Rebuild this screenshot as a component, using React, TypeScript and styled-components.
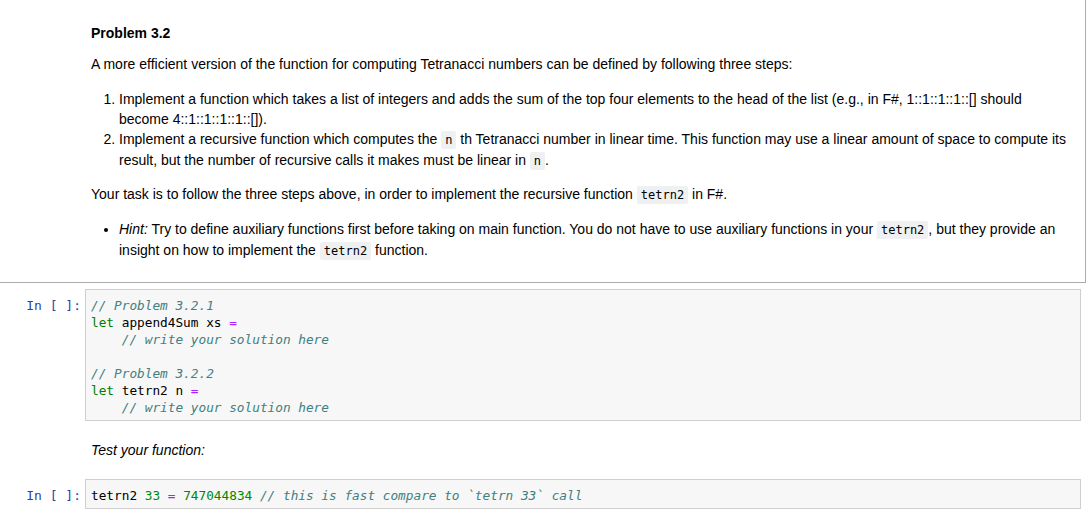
import React from "react";
import styled, { createGlobalStyle } from "styled-components";

const GlobalStyle = createGlobalStyle`
  body {
    margin: 0;
    background: #fff;
    color: #000;
    font-family: "Liberation Sans", Arial, sans-serif;
    font-size: 14px;
    line-height: 20px;
  }
`;

const Notebook = styled.div`
  display: flex;
  flex-direction: column;
  width: 1092px;
`;

const TextCell = styled.div<{ $framed?: boolean }>`
  display: flex;
  flex-direction: column;
  margin-right: 6px;
  padding: ${(p) => (p.$framed ? "23px 16px 21px 91px" : "19px 16px 19px 91px")};
  border-right: ${(p) => (p.$framed ? "1px solid #ababab" : "none")};
  border-bottom: ${(p) => (p.$framed ? "1px solid #ababab" : "none")};
`;

const Title = styled.div`
  font-weight: bold;
`;

const Para = styled.p<{ $italic?: boolean; $top?: number }>`
  margin: ${(p) => p.$top ?? 0}px 0 0;
  font-style: ${(p) => (p.$italic ? "italic" : "normal")};
`;

const List = styled.ol<{ $bullet?: boolean; $top?: number }>`
  margin: ${(p) => p.$top ?? 0}px 0 0;
  padding-left: 28px;
  list-style-type: ${(p) => (p.$bullet ? "disc" : "decimal")};
`;

const Code = styled.code`
  font-family: "DejaVu Sans Mono", "Liberation Mono", monospace;
  font-size: 12px;
  background: #eff0f1;
  padding: 2px 4px;
  border-radius: 2px;
`;

const CodeCell = styled.div<{ $top?: number }>`
  display: flex;
  margin-top: ${(p) => p.$top ?? 0}px;
`;

const Prompt = styled.div`
  width: 85px;
  flex: none;
  box-sizing: border-box;
  padding: 8px 4px 0 0;
  text-align: right;
  color: #303f9f;
  font-family: "DejaVu Sans Mono", "Liberation Mono", monospace;
  font-size: 13px;
  line-height: 17px;
`;

const Input = styled.pre`
  flex: 1;
  margin: 0 11px 0 0;
  padding: 7px 5px 4px 5px;
  background: #f7f7f7;
  border: 1px solid #cfcfcf;
  font-family: "DejaVu Sans Mono", "Liberation Mono", monospace;
  font-size: 12.75px;
  line-height: 17px;
  color: #000;
  white-space: pre;
`;

const Tok = styled.span<{ $kind: "comment" | "keyword" | "operator" | "number" }>`
  color: ${(p) =>
    ({ comment: "#408080", keyword: "#008000", operator: "#aa22ff", number: "#008800" })[p.$kind]};
  font-style: ${(p) => (p.$kind === "comment" ? "italic" : "normal")};
`;

const App: React.FC = () => {
  return (
    <>
      <GlobalStyle />
      <Notebook>
        <TextCell $framed>
          <Title>Problem 3.2</Title>
          <Para $top={11}>
            A more efficient version of the function for computing Tetranacci numbers can be defined by following
            three steps:
          </Para>
          <List $top={15}>
            <li>
              Implement a function which takes a list of integers and adds the sum of the top four elements to the
              head of the list (e.g., in F#, 1::1::1::1::[] should become 4::1::1::1::1::[]).
            </li>
            <li>
              Implement a recursive function which computes the <Code>n</Code> th Tetranacci number in linear time.
              This function may use a linear amount of space to compute its result, but the number of recursive calls
              it makes must be linear in <Code>n</Code>.
            </li>
          </List>
          <Para $top={13}>
            Your task is to follow the three steps above, in order to implement the recursive function{" "}
            <Code>tetrn2</Code> in F#.
          </Para>
          <List as="ul" $bullet $top={14}>
            <li>
              <em>Hint:</em> Try to define auxiliary functions first before taking on main function. You do not have
              to use auxiliary functions in your <Code>tetrn2</Code>, but they provide an insight on how to implement
              the <Code>tetrn2</Code> function.
            </li>
          </List>
        </TextCell>

        <CodeCell $top={6}>
          <Prompt>In [ ]:</Prompt>
          <Input>
            <Tok $kind="comment">// Problem 3.2.1</Tok>
            {"\n"}
            <Tok $kind="keyword">let</Tok> append4Sum xs <Tok $kind="operator">=</Tok>
            {"\n    "}
            <Tok $kind="comment">// write your solution here</Tok>
            {"\n\n"}
            <Tok $kind="comment">// Problem 3.2.2</Tok>
            {"\n"}
            <Tok $kind="keyword">let</Tok> tetrn2 n <Tok $kind="operator">=</Tok>
            {"\n    "}
            <Tok $kind="comment">// write your solution here</Tok>
          </Input>
        </CodeCell>

        <TextCell>
          <Para $italic>Test your function:</Para>
        </TextCell>

        <CodeCell>
          <Prompt>In [ ]:</Prompt>
          <Input>
            tetrn2 <Tok $kind="number">33</Tok> <Tok $kind="operator">=</Tok> <Tok $kind="number">747044834</Tok>{" "}
            <Tok $kind="comment">// this is fast compare to `tetrn 33` call</Tok>
          </Input>
        </CodeCell>
      </Notebook>
    </>
  );
};

export default App;
